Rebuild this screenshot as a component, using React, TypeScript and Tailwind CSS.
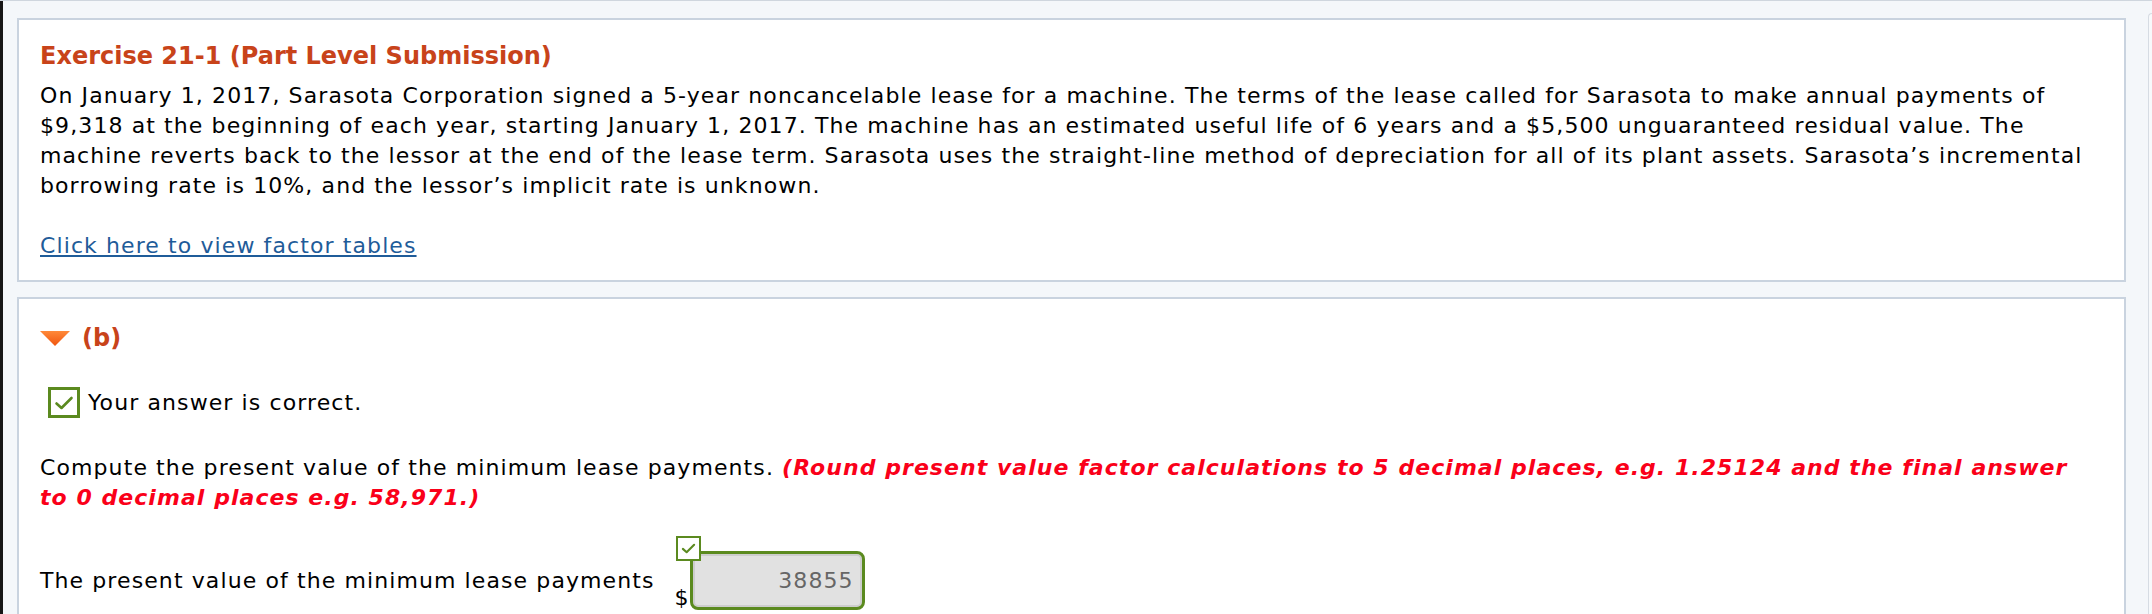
import React from "react";

const GREEN = "#5b8a1f";

const Check = ({ className, width = 2.6 }: { className?: string; width?: number }) => (
  <svg viewBox="0 0 20 20" className={className} fill="none">
    <path d="M2.5 10.5 L7.5 15 L17.5 5" stroke={GREEN} strokeWidth={width} strokeLinecap="round" strokeLinejoin="round" />
  </svg>
);

const Triangle = () => (
  <svg width="30" height="15" viewBox="0 0 30 15">
    <defs>
      <linearGradient id="tri" x1="0" y1="0" x2="0" y2="1">
        <stop offset="0" stopColor="#ff8a3a" />
        <stop offset="1" stopColor="#f0550f" />
      </linearGradient>
    </defs>
    <polygon points="0,0 30,0 15,15" fill="url(#tri)" />
  </svg>
);

export default function App() {
  return (
    <div className="flex h-[614px] overflow-hidden border-t border-[#cfd6de] bg-[#f4f7fa] font-['DejaVu_Sans',Verdana,sans-serif] text-[22px] leading-[30px] tracking-[1.1px] text-black">
      <div className="w-[3px] shrink-0 bg-[#161616]" />
      <div className="flex-1 pl-[14px] pt-[17px]">
        {/* question */}
        <div className="border-2 border-[#c9d3df] bg-white pt-[21px] pr-5 pb-[19px] pl-[21px]">
          <h1 className="text-[24px] font-bold tracking-normal text-[#c8431a]">Exercise 21-1 (Part Level Submission)</h1>
          <p className="mt-[10px]">
            On January 1, 2017, Sarasota Corporation signed a 5-year noncancelable lease for a machine. The terms of the lease called for Sarasota to make annual payments of $9,318 at the beginning of each year, starting January 1, 2017. The machine has an estimated useful life of 6 years and a $5,500 unguaranteed residual value. The machine reverts back to the lessor at the end of the lease term. Sarasota uses the straight-line method of depreciation for all of its plant assets. Sarasota’s incremental borrowing rate is 10%, and the lessor’s implicit rate is unknown.
          </p>
          <p className="mt-[30px]">
            <a href="#" className="text-[#1f5c99] underline">Click here to view factor tables</a>
          </p>
        </div>

        {/* part b */}
        <div className="mt-[15px] h-[400px] border-2 border-[#c9d3df] bg-white pt-[24px] pr-5 pl-[21px]">
          <div className="flex h-[30px] items-center gap-3">
            <Triangle />
            <span className="text-[24px] font-bold tracking-normal text-[#c8431a]">(b)</span>
          </div>

          <div className="mt-[34px] flex items-center pl-2">
            <div className="flex h-[31px] w-[32px] items-center justify-center border-[3px] border-[#5b8a1f] bg-white">
              <Check className="h-[20px] w-[20px]" />
            </div>
            <span className="ml-2">Your answer is correct.</span>
          </div>

          <p className="mt-[35px]">
            Compute the present value of the minimum lease payments.{" "}
            <b className="italic tracking-[1.05px] text-[#fa0019]">
              (Round present value factor calculations to 5 decimal places, e.g. 1.25124 and the final answer
              <br />
              to 0 decimal places e.g. 58,971.)
            </b>
          </p>

          <div className="mt-[38px] flex items-center">
            <span>The present value of the minimum lease payments</span>
            <div className="ml-[20px] flex items-end">
              <span className="leading-[24px]">$</span>
              <div className="relative">
                <div className="absolute -top-[15px] -left-[14px] z-10 flex h-[25px] w-[25px] items-center justify-center border-2 border-[#5b8a1f] bg-white">
                  <Check className="h-[15px] w-[15px]" width={2.8} />
                </div>
                <div className="flex h-[59px] w-[175px] items-center justify-end rounded-[8px] border-[3px] border-[#5b8a1f] bg-[#e1e1e1] pr-[8px] text-[#666] shadow-[inset_0_0_0_2px_#cdcdcd]">
                  38855
                </div>
              </div>
            </div>
          </div>
        </div>
      </div>
      <div className="w-[26px] shrink-0 pt-[12px] pl-[22px]">
        <div className="h-full rounded-tl-[6px] border-t border-l border-[#d6dce3] bg-[#f7f9fb]" />
      </div>
    </div>
  );
}
